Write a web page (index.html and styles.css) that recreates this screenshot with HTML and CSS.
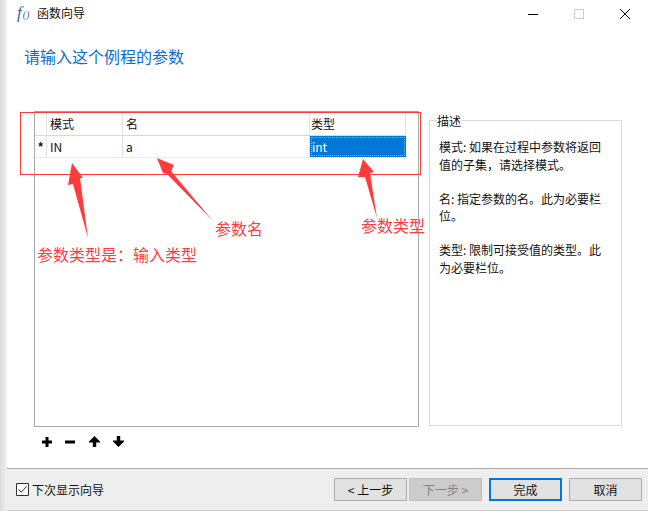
FILE: index.html
```html
<!DOCTYPE html>
<html lang="zh-CN">
<head>
    <meta charset="UTF-8">
    <meta name="viewport" content="width=device-width, initial-scale=1.0">
    <title>函数向导</title>
    <link rel="stylesheet" href="styles.css">
</head>
<body>
    <div class="window">
        <div class="titlebar">
            <span class="app-icon">f<small>()</small></span>
            <span class="app-title">函数向导</span>
            <div class="controls">
                <svg width="12" height="12" viewBox="0 0 12 12"><path d="M1 6.5H11" stroke="#000" fill="none"/></svg>
                <svg width="12" height="12" viewBox="0 0 12 12"><path d="M1.5 1.5H10.5V10.5H1.5Z" stroke="#ccc" fill="none"/></svg>
                <svg width="12" height="12" viewBox="0 0 12 12"><path d="M1 1L11 11M11 1L1 11" stroke="#000" fill="none"/></svg>
            </div>
        </div>

        <h1 class="heading">请输入这个例程的参数</h1>

        <div class="content">
            <div class="left">
                <div class="grid">
                    <div class="row head">
                        <div class="cell c-mark"></div>
                        <div class="cell c-mode">模式</div>
                        <div class="cell c-name">名</div>
                        <div class="cell c-type">类型</div>
                    </div>
                    <div class="row">
                        <div class="cell c-mark star">*</div>
                        <div class="cell c-mode">IN</div>
                        <div class="cell c-name">a</div>
                        <div class="cell c-type selected"><span>int</span></div>
                    </div>
                </div>
                <div class="tools">
                    <svg width="10" height="10" viewBox="0 0 10 10"><path d="M3.5 0H6.5V3.5H10V6.5H6.5V10H3.5V6.5H0V3.5H3.5Z"/></svg>
                    <svg width="10" height="10" viewBox="0 0 10 10"><path d="M0 3.5H10V6.5H0Z"/></svg>
                    <svg class="up" width="11" height="11" viewBox="0 0 11 11"><path d="M5.5 0L11 5.5V6.5H7.2V11H3.8V6.5H0V5.5Z"/></svg>
                    <svg width="11" height="11" viewBox="0 0 11 11"><path d="M3.8 0H7.2V4.5H11V5.5L5.5 11L0 5.5V4.5H3.8Z"/></svg>
                </div>
            </div>

            <div class="desc">
                <span class="desc-title">描述</span>
                <p>模式: 如果在过程中参数将返回值的子集，请选择模式。</p>
                <p>名: 指定参数的名。此为必要栏位。</p>
                <p>类型: 限制可接受值的类型。此为必要栏位。</p>
            </div>
        </div>

        <div class="footer">
            <label class="check">
                <svg width="13" height="13" viewBox="0 0 13 13"><path d="M.5 .5H12.5V12.5H.5Z" fill="#fff" stroke="#333"/><path d="M2.5 6.5L5.2 9.3L10.5 3.5" fill="none" stroke="#333"/></svg>
                下次显示向导
            </label>
            <div class="buttons">
                <button class="btn">&lt; 上一步</button>
                <button class="btn disabled">下一步 &gt;</button>
                <button class="btn primary">完成</button>
                <button class="btn">取消</button>
            </div>
        </div>
    </div>

    <!-- annotations drawn on top of the screenshot -->
    <div class="red-box"></div>
    <svg class="arrows" width="648" height="511" viewBox="0 0 648 511">
        <path d="M72 163L83 178L80 178L88 238L73 184L68 185Z"/>
        <path d="M157 158L174 165L171 171L213 221L167 174L163 173Z"/>
        <path d="M363 159L374 172L370 173L377 218L365 177L358 177Z"/>
    </svg>
    <span class="note note-mode">参数类型是：输入类型</span>
    <span class="note note-name">参数名</span>
    <span class="note note-type">参数类型</span>
</body>
</html>
```

FILE: styles.css
```css
* {
    margin: 0;
    padding: 0;
    box-sizing: border-box;
    font-family: "Noto Sans CJK SC", "Liberation Sans", sans-serif;
}

body {
    width: 648px;
    height: 511px;
    overflow: hidden;
    padding-left: 7px;
    background: linear-gradient(to right, #dcdcdc, #f2f2f2 7px, #fff 7px);
    position: relative;
    font-size: 12px;
    color: #111;
}

.window {
    background: #fff;
    height: 511px;
    display: flex;
    flex-direction: column;
}

.titlebar {
    height: 28px;
    flex: none;
    display: flex;
    align-items: center;
    padding-left: 10px;
}

.app-icon {
    font-family: "Liberation Serif", serif;
    font-style: italic;
    font-size: 17px;
    line-height: 20px;
    color: #3f648c;
    width: 20px;
}

.app-icon small {
    font-family: "Liberation Serif", serif;
    font-size: 10px;
    margin-left: 1px;
}

.app-title {
    font-size: 12px;
    line-height: 16px;
    margin-bottom: 3px;
}

.controls {
    margin-left: auto;
    display: flex;
    gap: 34px;
    padding-right: 17px;
}

.heading {
    flex: none;
    font-size: 16px;
    font-weight: 400;
    line-height: 22px;
    color: #0a6ed1;
    margin: 17px 0 0 17px;
}

.content {
    flex: 1;
    display: flex;
    align-items: flex-start;
    padding: 44px 0 0 27px;
    gap: 10px;
}

.grid {
    width: 385px;
    height: 316px;
    border: 1px solid #a9a9b0;
    border-top-color: #a0a0a0;
    padding-top: 1px;
}

.row {
    display: flex;
    height: 22px;
    border-bottom: 1px solid #ececec;
    width: 371px;
}

.head {
    height: 23px;
    border-bottom-color: #d8d8d8;
}

.cell {
    line-height: 21px;
    padding-left: 3px;
    border-right: 1px solid #e2e2e2;
}

.c-mark {
    width: 12px;
    padding: 0;
    text-align: center;
}

.star {
    font-family: "Liberation Mono", monospace;
    font-weight: 700;
    font-size: 12px;
    line-height: 25px;
}

.c-mode {
    width: 76px;
}

.c-name {
    width: 187px;
}

.c-type {
    width: 96px;
    padding-left: 0;
}

.head .c-type {
    padding-left: 1px;
}

.row .selected {
    background: #0078d7;
    color: #fff;
    border: 1px solid #0078d7;
    height: 21px;
    line-height: 19px;
}

.selected span {
    display: block;
    height: 19px;
    outline: 1px dotted #e8a040;
    outline-offset: -1px;
    padding-left: 1px;
}

.tools {
    display: flex;
    align-items: center;
    height: 11px;
    margin: 9px 0 0 8px;
    gap: 13px;
}

.tools .up {
    margin-left: 1px;
}

.desc {
    position: relative;
    width: 193px;
    height: 306px;
    margin-top: 9px;
    border: 1px solid #d9d9d9;
    padding: 17px 9px 0;
}

.desc-title {
    position: absolute;
    top: -8px;
    left: 7px;
    background: #fff;
    line-height: 16px;
}

.desc p {
    line-height: 17.5px;
    margin-bottom: 16.5px;
}

.footer {
    height: 43px;
    flex: none;
    background: #eee;
    border-top: 1px solid #aaa;
    border-bottom: 1px solid #ccc;
    display: flex;
    align-items: center;
    justify-content: space-between;
    padding: 0 6px 0 9px;
}

.check {
    display: flex;
    align-items: center;
    gap: 3px;
}

.buttons {
    display: flex;
    gap: 2px;
}

.btn {
    width: 73px;
    height: 23px;
    border: 1px solid #adadad;
    background: #e1e1e1;
    font-size: 12px;
    color: #111;
}

.disabled {
    background: #ccc;
    border-color: #bfbfbf;
    color: #838383;
}

.primary {
    border: 2px solid #0078d7;
    margin: 0 5px;
}

/* annotations */
.red-box {
    position: absolute;
    left: 20px;
    top: 112px;
    width: 401px;
    height: 63px;
    border: 1px solid #ff3b3b;
}

.arrows {
    position: absolute;
    left: 0;
    top: 0;
    fill: #ff3b3b;
}

.note {
    position: absolute;
    font-size: 16px;
    line-height: 22px;
    color: #ff3b3b;
}

.note-mode {
    left: 37px;
    top: 243px;
}

.note-name {
    left: 215px;
    top: 217px;
}

.note-type {
    left: 361px;
    top: 214px;
}
```
